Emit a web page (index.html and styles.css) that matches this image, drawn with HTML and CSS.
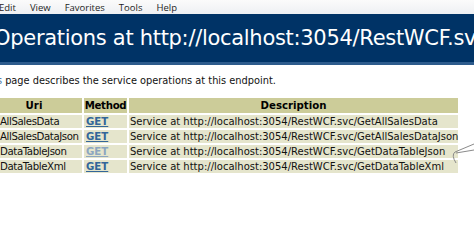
FILE: index.html
```html
<!DOCTYPE html>
<html lang="en">

<head>
  <meta charset="UTF-8">
  <title>Operations at http://localhost:3054/RestWCF.svc</title>
  <link rel="stylesheet" href="styles.css">
</head>

<body>
  <div class="menubar">
    <span>Edit</span>
    <span>View</span>
    <span>Favorites</span>
    <span>Tools</span>
    <span>Help</span>
  </div>

  <div class="heading">
    <h1>Operations at http://localhost:3054/RestWCF.svc</h1>
  </div>

  <div class="content">
    <p class="intro"><span class="cut">This</span> page describes the service operations at this endpoint.</p>

    <table class="ops">
      <tr>
        <th class="col-uri">Uri</th>
        <th class="col-method">Method</th>
        <th class="col-desc">Description</th>
      </tr>
      <tr>
        <td class="uri">AllSalesData</td>
        <td class="method"><a href="#">GET</a></td>
        <td class="desc">Service at http://localhost:3054/RestWCF.svc/GetAllSalesData</td>
      </tr>
      <tr>
        <td class="uri">AllSalesDataJson</td>
        <td class="method"><a href="#">GET</a></td>
        <td class="desc">Service at http://localhost:3054/RestWCF.svc/GetAllSalesDataJson</td>
      </tr>
      <tr>
        <td class="uri">DataTableJson</td>
        <td class="method"><a href="#" class="visited">GET</a></td>
        <td class="desc">Service at http://localhost:3054/RestWCF.svc/GetDataTableJson</td>
      </tr>
      <tr>
        <td class="uri">DataTableXml</td>
        <td class="method"><a href="#">GET</a></td>
        <td class="desc">Service at http://localhost:3054/RestWCF.svc/GetDataTableXml</td>
      </tr>
    </table>
  </div>

  <!-- pen mark pointing at the json row -->
  <svg class="mark" width="40" height="30" viewBox="0 0 40 30">
    <path d="M40 4 L21 12 Q17 15 22 23" fill="none" stroke="#8a8a8a" stroke-width="1" />
    <path d="M22 13 L40 10" fill="none" stroke="#8a8a8a" stroke-width="1" />
  </svg>
</body>

</html>
```

FILE: styles.css
```css
body {
  margin: 0;
  font-family: "DejaVu Sans", Verdana, sans-serif;
  background: white;
  width: 474px;
  height: 248px;
  overflow: hidden;
  position: relative;
}

.menubar {
  height: 14px;
  display: flex;
  align-items: center;
  gap: 14px;
  margin-left: -1px;
  background: linear-gradient(#fbfbfb, #eef0f3);
  font-family: "Open Sans", "DejaVu Sans", sans-serif;
  font-size: 9.5px;
  color: #1e1e1e;
}

.heading {
  background: #003366;
  height: 48px;
  border-bottom: 3px solid #2d5b8c;
  overflow: hidden;
  white-space: nowrap;
}

.heading h1 {
  margin: 0 0 0 -6px;
  padding-top: 12px;
  font-weight: normal;
  font-size: 21px;
  color: white;
  letter-spacing: -0.3px;
}

.content {
  padding-top: 10px;
}

.intro {
  margin: 0 0 10px -18px;
  font-size: 9.8px;
  color: #111;
  white-space: nowrap;
}

.intro .cut {
  color: #4a78a8;
}

.ops {
  table-layout: fixed;
  width: 476px;
  border-spacing: 2px;
  margin-left: -16px;
  font-size: 10.2px;
  white-space: nowrap;
}

.ops th,
.ops td {
  box-sizing: border-box;
}

.ops th {
  background: #cccc99;
  font-weight: bold;
  padding: 0;
  height: 15px;
  line-height: 15px;
}

.ops td {
  background: #e5e5cc;
  padding: 0 0 0 2px;
  height: 13px;
  line-height: 13px;
  color: #111;
}

.ops td.uri {
  padding-left: 14px;
  letter-spacing: -0.4px;
}

.ops td.desc {
  padding-left: 1px;
  font-size: 10px;
}

.col-uri {
  width: 96px;
  padding-left: 14px;
}

.col-method {
  width: 43px;
  letter-spacing: -0.3px;
}

.col-desc {
  width: 329px;
}

.ops a {
  color: #336699;
  font-weight: bold;
  text-decoration: underline;
}

.ops a.visited {
  color: #8ca6c0;
}

.mark {
  position: absolute;
  left: 434px;
  top: 140px;
}
```
